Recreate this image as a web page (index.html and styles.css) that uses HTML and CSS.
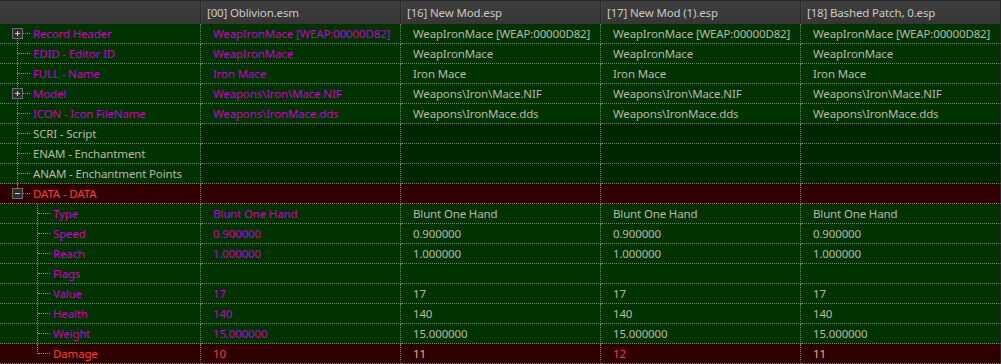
FILE: index.html
```html
<!DOCTYPE html>
<html>
<head>
<meta charset="utf-8">
<link rel="stylesheet" href="styles.css">
</head>
<body>
<div class="grid">
  <div class="hdr">
    <div class="hc"></div>
    <div class="hc">[00] Oblivion.esm</div>
    <div class="hc">[16] New Mod.esp</div>
    <div class="hc">[17] New Mod (1).esp</div>
    <div class="hc">[18] Bashed Patch, 0.esp</div>
  </div>

  <div class="row g">
    <div class="c n"><span class="node first"><span class="box plus"></span></span><span class="m">Record Header</span></div>
    <div class="c m">WeapIronMace [WEAP:00000D82]</div>
    <div class="c">WeapIronMace [WEAP:00000D82]</div>
    <div class="c">WeapIronMace [WEAP:00000D82]</div>
    <div class="c">WeapIronMace [WEAP:00000D82]</div>
  </div>
  <div class="row g">
    <div class="c n"><span class="node"></span><span class="m">EDID - Editor ID</span></div>
    <div class="c m">WeapIronMace</div>
    <div class="c">WeapIronMace</div>
    <div class="c">WeapIronMace</div>
    <div class="c">WeapIronMace</div>
  </div>
  <div class="row g">
    <div class="c n"><span class="node"></span><span class="m">FULL - Name</span></div>
    <div class="c m">Iron Mace</div>
    <div class="c">Iron Mace</div>
    <div class="c">Iron Mace</div>
    <div class="c">Iron Mace</div>
  </div>
  <div class="row g">
    <div class="c n"><span class="node"><span class="box plus"></span></span><span class="m">Model</span></div>
    <div class="c m">Weapons\Iron\Mace.NIF</div>
    <div class="c">Weapons\Iron\Mace.NIF</div>
    <div class="c">Weapons\Iron\Mace.NIF</div>
    <div class="c">Weapons\Iron\Mace.NIF</div>
  </div>
  <div class="row g">
    <div class="c n"><span class="node"></span><span class="m">ICON - Icon FileName</span></div>
    <div class="c m">Weapons\IronMace.dds</div>
    <div class="c">Weapons\IronMace.dds</div>
    <div class="c">Weapons\IronMace.dds</div>
    <div class="c">Weapons\IronMace.dds</div>
  </div>
  <div class="row g">
    <div class="c n"><span class="node"></span><span>SCRI - Script</span></div>
    <div class="c d"></div>
    <div class="c d"></div>
    <div class="c d"></div>
    <div class="c d"></div>
  </div>
  <div class="row g">
    <div class="c n"><span class="node"></span><span>ENAM - Enchantment</span></div>
    <div class="c d"></div>
    <div class="c d"></div>
    <div class="c d"></div>
    <div class="c d"></div>
  </div>
  <div class="row g">
    <div class="c n"><span class="node"></span><span>ANAM - Enchantment Points</span></div>
    <div class="c d"></div>
    <div class="c d"></div>
    <div class="c d"></div>
    <div class="c d"></div>
  </div>
  <div class="row r">
    <div class="c n"><span class="node last"><span class="box minus"></span></span><span class="rd">DATA - DATA</span></div>
    <div class="c"></div>
    <div class="c"></div>
    <div class="c"></div>
    <div class="c"></div>
  </div>

  <div class="row g">
    <div class="c n"><span class="indent"></span><span class="node"></span><span class="m">Type</span></div>
    <div class="c m">Blunt One Hand</div>
    <div class="c">Blunt One Hand</div>
    <div class="c">Blunt One Hand</div>
    <div class="c">Blunt One Hand</div>
  </div>
  <div class="row g">
    <div class="c n"><span class="indent"></span><span class="node"></span><span class="m">Speed</span></div>
    <div class="c m">0.900000</div>
    <div class="c">0.900000</div>
    <div class="c">0.900000</div>
    <div class="c">0.900000</div>
  </div>
  <div class="row g">
    <div class="c n"><span class="indent"></span><span class="node"></span><span class="m">Reach</span></div>
    <div class="c m">1.000000</div>
    <div class="c">1.000000</div>
    <div class="c">1.000000</div>
    <div class="c">1.000000</div>
  </div>
  <div class="row g">
    <div class="c n"><span class="indent"></span><span class="node"></span><span class="m">Flags</span></div>
    <div class="c"></div>
    <div class="c"></div>
    <div class="c"></div>
    <div class="c"></div>
  </div>
  <div class="row g">
    <div class="c n"><span class="indent"></span><span class="node"></span><span class="m">Value</span></div>
    <div class="c m">17</div>
    <div class="c">17</div>
    <div class="c">17</div>
    <div class="c">17</div>
  </div>
  <div class="row g">
    <div class="c n"><span class="indent"></span><span class="node"></span><span class="m">Health</span></div>
    <div class="c m">140</div>
    <div class="c">140</div>
    <div class="c">140</div>
    <div class="c">140</div>
  </div>
  <div class="row g">
    <div class="c n"><span class="indent"></span><span class="node"></span><span class="m">Weight</span></div>
    <div class="c m">15.000000</div>
    <div class="c">15.000000</div>
    <div class="c">15.000000</div>
    <div class="c">15.000000</div>
  </div>
  <div class="row r">
    <div class="c n"><span class="indent"></span><span class="node last"></span><span class="rd">Damage</span></div>
    <div class="c rd">10</div>
    <div class="c o">11</div>
    <div class="c rd">12</div>
    <div class="c o">11</div>
  </div>
</div>
</body>
</html>
```

FILE: styles.css
```css
body {
  margin: 0;
  background: #1e1e1e;
  font-family: "Noto Sans", "DejaVu Sans", sans-serif;
  font-size: 11.5px;
  letter-spacing: -0.15px;
}

.grid {
  width: 1001px;
}

.hdr {
  display: flex;
  height: 24px;
  box-sizing: border-box;
  border-top: 1px solid #2b2b2b;
  background: linear-gradient(#3e3e3e, #363636);
  color: #c8c8c8;
}

.hc {
  width: 200px;
  box-sizing: border-box;
  border-right: 1px solid #282828;
  padding-left: 6px;
  line-height: 23px;
  white-space: nowrap;
  overflow: hidden;
}

.hc + .hc {
  box-shadow: inset 1px 0 #454545;
}

.hc:first-child {
  width: 201px;
}

.row {
  display: flex;
  height: 20px;
}

.row.g {
  background: #003300;
}

.row.r {
  background: #300000;
}

.c {
  width: 200px;
  flex: none;
  box-sizing: border-box;
  border-right: 1px dotted #7a7a7a;
  border-bottom: 1px dotted #7a7a7a;
  padding-left: 12px;
  line-height: 19px;
  white-space: nowrap;
  overflow: hidden;
  color: #b8b8aa;
}

.c:last-child {
  border-right: 1px solid #262626;
}

.c.n {
  width: 201px;
  padding-left: 7px;
  display: flex;
}

.c.d {
  background: #002600;
}

.m {
  color: #c800c8;
}

.rd {
  color: #ff3a3a;
}

.o {
  color: #ecb060;
}

.indent {
  width: 20px;
  flex: none;
}

.node {
  position: relative;
  width: 26px;
  flex: none;
}

.node::before {
  content: "";
  position: absolute;
  left: 10px;
  top: 0;
  bottom: 0;
  border-left: 1px dotted #8c8c8c;
}

.node.first::before {
  top: 9px;
}

.node.last::before {
  bottom: auto;
  height: 10px;
}

.node::after {
  content: "";
  position: absolute;
  left: 11px;
  top: 9px;
  width: 12px;
  border-top: 1px dotted #8c8c8c;
}

.box {
  position: absolute;
  left: 5px;
  top: 4px;
  width: 11px;
  height: 11px;
  box-sizing: border-box;
  border: 1px solid #6e6e6e;
  background: #2e2e2e;
  z-index: 1;
}

.box::before {
  content: "";
  position: absolute;
  left: 2px;
  top: 4px;
  width: 5px;
  height: 1px;
  background: #cfcfcf;
}

.box.plus::after {
  content: "";
  position: absolute;
  left: 4px;
  top: 2px;
  width: 1px;
  height: 5px;
  background: #cfcfcf;
}
```
